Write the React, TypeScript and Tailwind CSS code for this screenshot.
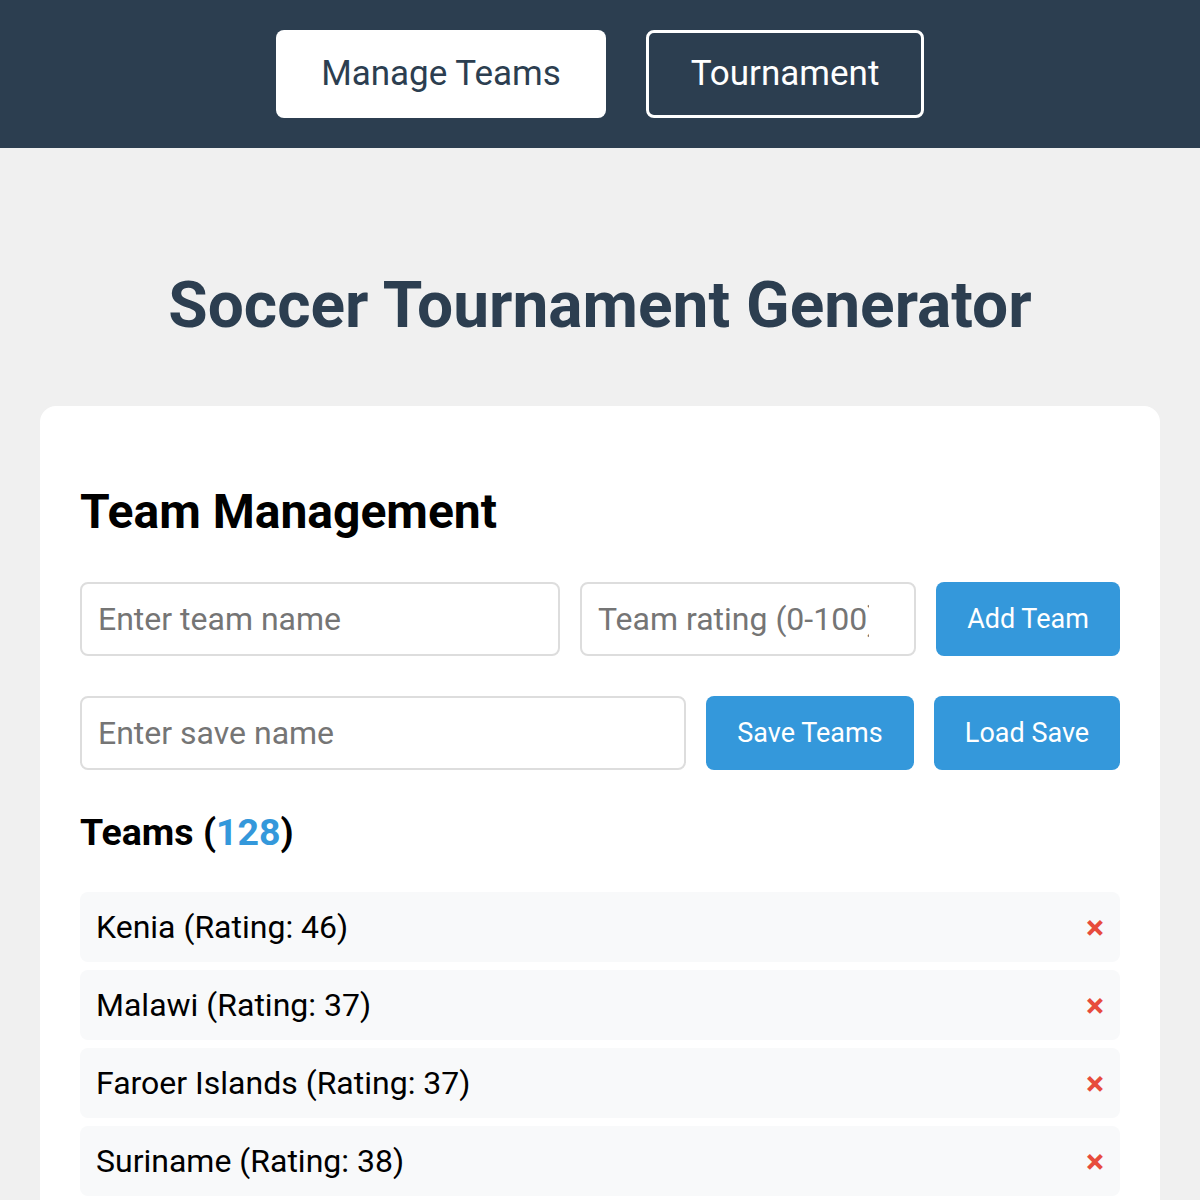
import { useState } from "react";

const initialTeams = [
	{ name: "Kenia", rating: 46 },
	{ name: "Malawi", rating: 37 },
	{ name: "Faroer Islands", rating: 37 },
	{ name: "Suriname", rating: 38 },
	{ name: "Haiti", rating: 41 },
];

const TeamRow = ({ team, onRemove }) => {
	return (
		<li className="flex h-[70px] items-center justify-between rounded-lg bg-[#f8f9fa] pl-4 pr-4">
			<span className="text-[32px] text-black">
				{team.name} (Rating: {team.rating})
			</span>
			<button onClick={onRemove} className="text-[34px] font-bold leading-none text-[#e74c3c]">
				×
			</button>
		</li>
	);
};

const App = () => {
	const [teams, setTeams] = useState(initialTeams);

	return (
		<div className="min-h-screen bg-[#f0f0f0] font-['Roboto',sans-serif]">
			<nav className="flex h-[148px] items-center justify-center gap-10 bg-[#2c3e50]">
				<button className="h-[88px] w-[330px] rounded-lg bg-white text-[35px] text-[#2c3e50]">Manage Teams</button>
				<button className="h-[88px] w-[278px] rounded-lg border-[3px] border-white text-[35px] text-white">Tournament</button>
			</nav>

			<main className="px-10">
				<h1 className="pb-[64px] pt-[122px] text-center text-[64px] font-bold leading-[72px] text-[#2c3e50]">Soccer Tournament Generator</h1>

				<section className="rounded-2xl bg-white px-10 pb-10 pt-[78px]">
					<h2 className="text-[48px] font-bold leading-[56px] text-black">Team Management</h2>

					<div className="mt-[42px] flex gap-5">
						<input
							placeholder="Enter team name"
							className="h-[74px] w-[480px] rounded-lg border-2 border-[#ddd] px-4 text-[32px] placeholder:text-[#757575]"
						/>
						<input
							type="number"
							placeholder="Team rating (0-100)"
							className="h-[74px] w-[336px] rounded-lg border-2 border-[#ddd] pl-4 pr-[30px] text-[32px] placeholder:text-[#757575]"
						/>
						<button className="h-[74px] flex-1 rounded-lg bg-[#3498db] text-[27px] text-white">Add Team</button>
					</div>

					<div className="mt-10 flex gap-5">
						<input
							placeholder="Enter save name"
							className="h-[74px] flex-1 rounded-lg border-2 border-[#ddd] px-4 text-[32px] placeholder:text-[#757575]"
						/>
						<button className="h-[74px] w-[208px] rounded-lg bg-[#3498db] text-[27px] text-white">Save Teams</button>
						<button className="h-[74px] w-[186px] rounded-lg bg-[#3498db] text-[27px] text-white">Load Save</button>
					</div>

					<h3 className="mt-[40px] text-[37.5px] font-bold leading-[44px] text-black">
						Teams (<span className="text-[#3498db]">128</span>)
					</h3>

					<ul className="mt-[38px] flex flex-col gap-2">
						{teams.map((team, i) => (
							<TeamRow key={`team${i}`} team={team} onRemove={() => setTeams(teams.filter((_, j) => j !== i))} />
						))}
					</ul>
				</section>
			</main>
		</div>
	);
};

export default App;
